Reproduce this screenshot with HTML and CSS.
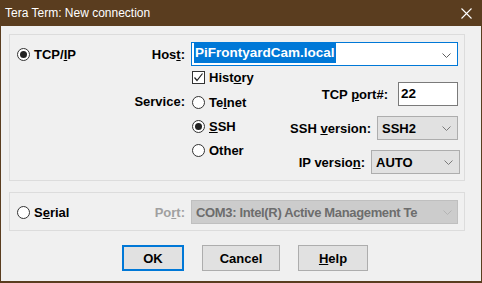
FILE: index.html
```html
<!DOCTYPE html>
<html>
<head>
<meta charset="utf-8">
<link rel="stylesheet" href="styles.css">
</head>
<body>
<div class="window">
  <div class="titlebar">
    <span class="title">Tera Term: New connection</span>
    <svg class="close" width="11" height="11" viewBox="0 0 11 11"><path d="M0.5 0.5 L10.5 10.5 M10.5 0.5 L0.5 10.5" stroke="#fff" stroke-width="1.1" fill="none"/></svg>
  </div>
  <div class="body">
    <div class="group group-tcp">
      <label class="radio opt-main"><span class="rb on"></span><span>TCP/<u>I</u>P</span></label>
      <span class="lbl lbl-host">Hos<u>t</u>:</span>
      <div class="combo combo-host">
        <span class="sel">PiFrontyardCam.local</span>
        <svg class="chev" width="9" height="5" viewBox="0 0 9 5"><path d="M0.5 0.5 L4.5 4.5 L8.5 0.5" stroke="#5f5f5f" fill="none"/></svg>
      </div>
      <span class="lbl lbl-service">Service:</span>
      <div class="options">
        <div class="col-left">
          <label class="check"><span class="cb"><svg width="11" height="11" viewBox="0 0 11 11"><path d="M1.5 5.5 L4 8.5 L9.5 1.5" stroke="#222" stroke-width="1.2" fill="none"/></svg></span><span>Hist<u>o</u>ry</span></label>
          <label class="radio opt-first"><span class="rb"></span><span>Te<u>l</u>net</span></label>
          <label class="radio"><span class="rb on"></span><span><u>S</u>SH</span></label>
          <label class="radio"><span class="rb"></span><span>Other</span></label>
        </div>
        <div class="col-right">
          <div class="field field-port"><span class="lbl">TCP <u>p</u>ort#:</span><div class="edit">22</div></div>
          <div class="field"><span class="lbl">SSH <u>v</u>ersion:</span>
            <div class="combo combo-ssh"><span>SSH2</span><svg class="chev" width="9" height="5" viewBox="0 0 9 5"><path d="M0.5 0.5 L4.5 4.5 L8.5 0.5" stroke="#7a7a7a" fill="none"/></svg></div>
          </div>
          <div class="field field-ip"><span class="lbl">IP versio<u>n</u>:</span>
            <div class="combo combo-ip"><span>AUTO</span><svg class="chev" width="9" height="5" viewBox="0 0 9 5"><path d="M0.5 0.5 L4.5 4.5 L8.5 0.5" stroke="#7a7a7a" fill="none"/></svg></div>
          </div>
        </div>
      </div>
    </div>
    <div class="group group-serial">
      <label class="radio opt-main"><span class="rb"></span><span>S<u>e</u>rial</span></label>
      <span class="lbl lbl-port">Po<u>r</u>t:</span>
      <div class="combo combo-port">
        <span class="port-text">COM3: Intel(R) Active Management Te</span>
        <svg class="chev" width="9" height="5" viewBox="0 0 9 5"><path d="M0.5 0.5 L4.5 4.5 L8.5 0.5" stroke="#b4b4b4" fill="none"/></svg>
      </div>
    </div>
    <div class="buttons">
      <button class="btn btn-ok">OK</button>
      <button class="btn btn-cancel">Cancel</button>
      <button class="btn btn-help"><u>H</u>elp</button>
    </div>
  </div>
</div>
</body>
</html>
```
FILE: styles.css
```css
* { box-sizing: border-box; }
html, body { margin: 0; padding: 0; }
body {
  width: 482px;
  height: 283px;
  overflow: hidden;
  font-family: "Liberation Sans", Arial, sans-serif;
  font-weight: bold;
  font-size: 13px;
  color: #000;
}
u { text-decoration: underline; text-decoration-thickness: 1px; text-underline-offset: 1px; }

.window {
  width: 482px;
  height: 283px;
  background: #5a3d1f;
  padding: 0 1px 2px 1px;
  display: flex;
  flex-direction: column;
}
.titlebar {
  height: 26px;
  flex: none;
  display: flex;
  align-items: center;
  justify-content: space-between;
  padding: 0 9px 0 4px;
  color: #fff;
  font-family: "Liberation Sans", Arial, sans-serif;
  font-weight: normal;
  font-size: 12px;
}
.close { display: block; }

.body {
  flex: 1;
  background: #f0f0f0;
  padding: 8px 0 0 8px;
}

.group {
  width: 456px;
  border: 1px solid #dcdcdc;
  display: grid;
  grid-template-columns: 108px 60px 1fr;
  align-content: start;
  padding: 7px 6px 0 7px;
}
.group-tcp { height: 147px; }
.group-serial { height: 39px; margin-top: 11px; }

.lbl { white-space: nowrap; }
.lbl-host, .lbl-port { grid-column: 2; text-align: right; align-self: center; }
.lbl-port { color: #a0a0a0; }
.lbl-service {
  grid-column: 2; grid-row: 2;
  margin-top: 24px; height: 24px; line-height: 24px;
  text-align: right;
}

.radio, .check { display: flex; align-items: center; height: 24px; white-space: nowrap; }
.check { height: 13px; margin-top: 5px; }
.opt-main { grid-column: 1; align-self: center; }
.opt-first { margin-top: 6px; }

.rb {
  width: 13px; height: 13px;
  border-radius: 50%;
  border: 1px solid #333;
  background: #fff;
  display: inline-flex; align-items: center; justify-content: center;
  margin-right: 4px;
  flex: none;
}
.rb.on::after { content: ""; width: 7px; height: 7px; border-radius: 50%; background: #222; }
.cb {
  width: 13px; height: 13px;
  border: 1px solid #333;
  background: #fff;
  display: inline-flex; align-items: center; justify-content: center;
  margin-right: 4px;
  flex: none;
}
.cb svg { display: block; }

.combo {
  height: 24px;
  display: flex;
  align-items: center;
  justify-content: space-between;
  border: 1px solid #adadad;
  background: #e1e1e1;
  padding: 0 6px 0 4px;
  white-space: nowrap;
}
.chev { display: block; flex: none; }
.combo-host {
  grid-column: 3;
  margin-left: 6px;
  width: 267px;
  background: #fff;
  border-color: #0078d7;
  padding-left: 2px;
  align-items: flex-start;
}
.combo-host .chev { margin-top: 10px; }
.sel {
  background: #0078d7;
  color: #fff;
  padding: 0 1px;
  line-height: 20px;
  font-size: 13.5px;
}
.combo-ssh { width: 81px; }
.combo-ip { width: 89px; margin-right: -2px; }
.combo-port {
  grid-column: 3;
  margin-left: 6px;
  width: 267px;
  background: #cccccc;
  border-color: #bfbfbf;
  color: #6d6d6d;
  padding-right: 5px;
}
.port-text { flex: 1; letter-spacing: -0.35px; }

.options {
  grid-column: 3; grid-row: 2;
  display: flex;
  padding-left: 7px;
}
.col-left { display: flex; flex-direction: column; }
.col-right {
  flex: 1;
  display: flex;
  flex-direction: column;
  align-items: flex-end;
  padding-top: 16px;
  gap: 10px;
}
.field { display: flex; align-items: center; gap: 6px; height: 24px; }
.field-port { gap: 10px; }
.edit {
  width: 60px; height: 24px;
  border: 1px solid #7a7a7a;
  background: #fff;
  padding-left: 2px;
  line-height: 22px;
  font-size: 13.5px;
}

.buttons {
  display: flex;
  gap: 18px;
  margin-top: 14px;
  padding-left: 113px;
}
.btn {
  height: 26px;
  border: 1px solid #adadad;
  background: #e1e1e1;
  font-family: inherit;
  font-weight: bold;
  font-size: 13px;
  color: #000;
  padding: 0;
}
.btn-ok { width: 62px; border: 2px solid #0078d7; }
.btn-cancel { width: 78px; }
.btn-help { width: 70px; }
```
